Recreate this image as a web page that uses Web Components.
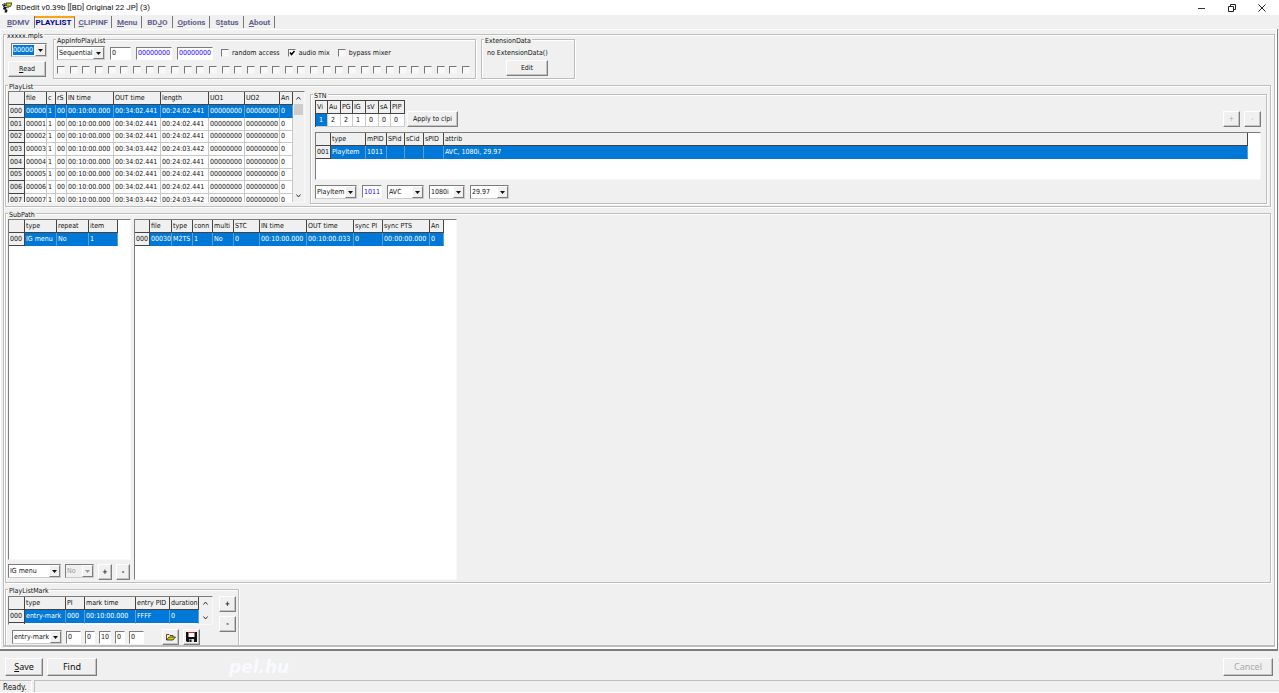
<!DOCTYPE html>
<html lang="en">
<head>
<meta charset="utf-8">
<title>BDedit</title>
<style>
  :root {
    --face: #f0f0f0;
    --shade: #7c7c7c;
    --line: #bdbdbd;
    --select: #0078d7;
  }
  body {
    margin: 0;
    background: var(--face);
    color: #111;
    font: 7px/10px "DejaVu Sans Condensed", "DejaVu Sans", sans-serif;
  }
</style>
</head>
<body>
<bd-app></bd-app>

<template id="app-template">
  <style>
    :host { display: flex; flex-direction: column; min-height: 100vh; }
    .row { display: flex; align-items: flex-start; }
    .page {
      flex: 1; display: flex; flex-direction: column;
      margin-right: 1px; padding: 5px 2px 2px 3px;
      border: solid var(--shade); border-width: 0 1px 2px 0;
      box-shadow: inset 1px 1px #fff, inset -1px -1px #fff;
    }
    .root { flex: 1; display: flex; flex-direction: column; border-width: 1px 1px 2px 1px; }
    .top { gap: 5px; padding: 4px 0 0 4px; }
    .disc { display: flex; flex-direction: column; gap: 4px; width: 40px; padding-top: 4px; }
    .disc bd-combo { margin-left: 3px; }
    .info { width: 423px; height: 40px; }
    .info .row { padding: 6px 3px 0; align-items: center; }
    .info .fields > * + * { margin-left: 5px; }
    .info .fields bd-check { margin-left: 8px; }
    .info .mask { justify-content: space-between; padding-top: 6px; padding-right: 5px; }
    .ext { width: 94px; height: 40px; }
    .ext .body { display: flex; flex-direction: column; padding: 8px 26px 0 5px; gap: 2px; white-space: nowrap; }
    .ext bd-button { align-self: flex-end; }
    .block { margin: 6px 3px 0 1px; }
    .playlist { padding: 5px 3px 2px 2px; gap: 5px; display: flex; }
    .playlist > bd-grid { flex: none; width: 297px; height: 112px; }
    .stn { flex: 1; margin-top: 3px; padding-bottom: 4px; }
    .stn .body { padding: 5px 5px 0 4px; }
    .stn .counts { gap: 2px; align-items: flex-end; }
    .stn .counts bd-grid { width: 90px; }
    .stn .counts .push { margin-left: auto; }
    .stn .counts .push + bd-button { margin-left: 2px; }
    .stn .streams { height: 48px; margin-top: 5px; }
    .stn .codec { gap: 5px; margin-top: 5px; }
    .subpath { flex: 1; display: flex; gap: 3px; padding: 5px 3px 2px 2px; }
    .left { display: flex; flex-direction: column; width: 123px; gap: 4px; }
    .left bd-grid { flex: 1; }
    .left .row { gap: 4px; }
    .items { width: 323px; }
    .mark { width: 234px; height: 56px; border-bottom: 0; box-shadow: inset 1px 1px #fff, 1px 0 #fff; }
    .mark .body { display: grid; grid-template-columns: 205px 16px; gap: 4px 6px; padding: 6px 3px 0 2px; }
    .mark bd-grid { height: 29px; }
    .mark .side { display: flex; flex-direction: column; gap: 4px; grid-row: span 2; }
    .mark .edit { gap: 4px; padding: 0 13px 0 4px; align-items: center; }
    .mark .edit .push { margin-left: auto; }
    .foot { gap: 4px; padding: 7px 6px 4px 5px; align-items: center; }
    .foot .push { margin-left: auto; }
    .brand { margin-left: 128px; color: #f8faff; font: italic bold 17px/18px "DejaVu Sans", sans-serif; }
  </style>
  <bd-titlebar>BDedit v0.39b [[BD] Original 22 JP] (3)</bd-titlebar>
  <bd-tabs></bd-tabs>
  <div class="page">
    <bd-group class="root" legend="xxxxx.mpls">
      <div class="row top">
        <div class="disc">
          <bd-combo label="Playlist file" value="00000" width="36" active></bd-combo>
          <bd-button width="38"><u>R</u>ead</bd-button>
        </div>
        <bd-group class="info" legend="AppInfoPlayList">
          <div class="row fields">
            <bd-combo label="Playback type" value="Sequential" width="48"></bd-combo>
            <bd-field label="Playback count" value="0" width="21"></bd-field>
            <bd-field label="UO mask 1" value="00000000" width="36" mark></bd-field>
            <bd-field label="UO mask 2" value="00000000" width="36" mark></bd-field>
            <bd-check>random access</bd-check>
            <bd-check checked>audio mix</bd-check>
            <bd-check>bypass mixer</bd-check>
          </div>
          <div class="row mask"></div>
        </bd-group>
        <bd-group class="ext" legend="ExtensionData">
          <div class="body">no ExtensionData()
            <bd-button width="42">Edit</bd-button>
          </div>
        </bd-group>
      </div>

      <bd-group class="block playlist" legend="PlayList">
        <bd-grid source="playlist" scroll="playlist"></bd-grid>
        <bd-group class="stn" legend="STN">
          <div class="body">
            <div class="row counts">
              <bd-grid source="counts" bare></bd-grid>
              <bd-button width="51">Apply to clpi</bd-button>
              <bd-button class="push" width="17" disabled>+</bd-button>
              <bd-button width="17" disabled>-</bd-button>
            </div>
            <bd-grid class="streams" source="streams"></bd-grid>
            <div class="row codec">
              <bd-combo label="Stream type" value="PlayItem" width="42"></bd-combo>
              <bd-field label="PID" value="1011" width="20" mark></bd-field>
              <bd-combo label="Codec" value="AVC" width="37"></bd-combo>
              <bd-combo label="Format" value="1080i" width="36"></bd-combo>
              <bd-combo label="Frame rate" value="29.97" width="39"></bd-combo>
            </div>
          </div>
        </bd-group>
      </bd-group>

      <bd-group class="block subpath" legend="SubPath">
        <div class="left">
          <bd-grid source="paths"></bd-grid>
          <div class="row">
            <bd-combo label="SubPath type" value="IG menu" width="53"></bd-combo>
            <bd-combo label="Repeat" value="No" width="29" disabled></bd-combo>
            <bd-button width="14"><b>+</b></bd-button>
            <bd-button width="14"><b>-</b></bd-button>
          </div>
        </div>
        <bd-grid class="items" source="items"></bd-grid>
      </bd-group>

      <bd-group class="block mark" legend="PlayListMark">
        <div class="body">
          <bd-grid source="marks" scroll="marks"></bd-grid>
          <div class="side">
            <bd-button width="17"><b>+</b></bd-button>
            <bd-button width="17"><b>-</b></bd-button>
          </div>
          <div class="row edit">
            <bd-combo label="Mark type" value="entry-mark" width="50"></bd-combo>
            <bd-field label="PlayItem" value="0" width="15"></bd-field>
            <bd-field label="Hours" value="0" width="10"></bd-field>
            <bd-field label="Minutes" value="10" width="12"></bd-field>
            <bd-field label="Seconds" value="0" width="10"></bd-field>
            <bd-field label="Frames" value="0" width="15"></bd-field>
            <bd-button class="push" width="17" label="Open marks">
              <svg width="10" height="8" viewBox="0 0 20 16"><path d="M1 14V3h5l2 2h6v3" fill="#ffff99" stroke="#222" stroke-width="1.6"/><path d="M1 14l5-6h13l-5 6z" fill="#d6d000" stroke="#222" stroke-width="1.6"/></svg>
            </bd-button>
            <bd-button width="17" label="Save marks">
              <svg width="11" height="10" viewBox="0 0 22 20"><path d="M0 0h22v20H2l-2-2z" fill="#111"/><path d="M5 2h12v8H5z" fill="#fff"/><path d="M4 0h14v2H4z" fill="#e02020"/><path d="M6 14h10v6H6z" fill="#ddd"/><path d="M7 15h4v5H7z" fill="#111"/></svg>
            </bd-button>
          </div>
        </div>
      </bd-group>
    </bd-group>
  </div>
  <div class="row foot">
    <bd-button width="38" big><u>S</u>ave</bd-button>
    <bd-button width="50" big>Find</bd-button>
    <span class="brand">pel.hu</span>
    <bd-button class="push" width="50" big disabled>Cancel</bd-button>
  </div>
  <bd-status>Ready.</bd-status>
</template>

<script>
// contents of the grids
const grids = {
  playlist: {
    cols: [16, 22, 9, 11, 47, 47, 48, 36, 35, 13],
    heads: ['', 'file', 'c', 'rS', 'IN time', 'OUT time', 'length', 'UO1', 'UO2', 'An'],
    rows: ['02.441', '02.441', '02.441', '03.442', '02.441', '02.441', '02.441', '03.442'].map((t, i) => [
      `00${i}`, `0000${i}`, '1', '00', '00:10:00.000', `00:34:${t}`, `00:24:${t}`, '00000000', '00000000', '0',
    ]),
  },
  counts: {
    cols: [12, 13, 12, 13, 13, 12, 14],
    heads: ['Vi', 'Au', 'PG', 'IG', 'sV', 'sA', 'PIP'],
    rows: [['1', '2', '2', '1', '0', '0', '0']],
  },
  streams: {
    cols: [15, 35, 21, 18, 19, 20, 'auto'],
    heads: ['', 'type', 'mPID', 'SPid', 'sCid', 'sPID', 'attrib'],
    rows: [['001', 'PlayItem', '1011', '', '', '', 'AVC, 1080i, 29.97']],
  },
  paths: {
    cols: [16, 32, 32, 29],
    heads: ['', 'type', 'repeat', 'item'],
    rows: [['000', 'IG menu', 'No', '1']],
  },
  items: {
    cols: [15, 22, 21, 20, 21, 26, 47, 47, 29, 47, 14],
    heads: ['', 'file', 'type', 'conn', 'multi', 'STC', 'IN time', 'OUT time', 'sync PI', 'sync PTS', 'An'],
    rows: [['000', '00030', 'M2TS', '1', 'No', '0', '00:10:00.000', '00:10:00.033', '0', '00:00:00.000', '0']],
  },
  marks: {
    cols: [16, 41, 19, 51, 34, 29],
    heads: ['', 'type', 'PI', 'mark time', 'entry PID', 'duration'],
    rows: [['000', 'entry-mark', '000', '00:10:00.000', 'FFFF', '0'], ['', '', '', '', '', '']],
  },
};

class BdTitlebar extends HTMLElement {
  constructor() {
    super();
    this.attachShadow({ mode: 'open' }).innerHTML = `
      <style>
        :host { display: flex; align-items: center; height: 15px; padding-right: 2px; background: #fff; font: 8px/12px Roboto, "Open Sans", sans-serif; }
        .logo { margin: 0 4px 0 2px; }
        .caption { flex: 1; }
        button { width: 30px; height: 15px; padding: 0; border: 0; background: none; line-height: 0; }
      </style>
      <svg class="logo" width="10" height="11" viewBox="0 0 20 22">
        <path d="M8 2h12l-3 7-8-1z" fill="#e8d800" stroke="#111" stroke-width="1.5"/>
        <path d="M0 5l6-3 2 5-5 3zM4 9l6 1-2 4 3 2-1 5H5l1-4-4-3zM10 10l4 1-2 2z" fill="#111"/>
        <path d="M2 6l3-1M5 15l2 1" stroke="#fff" stroke-width="1.5"/>
      </svg>
      <span class="caption"><slot></slot></span>
      <button aria-label="Minimize"><svg width="8" height="8"><path d="M0 4.5h7" stroke="#333"/></svg></button>
      <button aria-label="Restore"><svg width="8" height="8" fill="none" stroke="#222"><path d="M.5 2.500h5v5h-5zM2.500 2V.5h5v5H6"/></svg></button>
      <button aria-label="Close"><svg width="8" height="8"><path d="M.5.5l7 7M7.500.5l-7 7" stroke="#222"/></svg></button>
    `;
  }
}

class BdTabs extends HTMLElement {
  constructor() {
    super();
    // the underlined letter is the access key
    const tabs = [['', 'B', 'DMV'], ['PLAYLIST', '', ''], ['', 'C', 'LIPINF'], ['', 'M', 'enu'],
      ['BD', 'J', 'O'], ['', 'O', 'ptions'], ['S', 't', 'atus'], ['', 'A', 'bout']];
    this.attachShadow({ mode: 'open' }).innerHTML = `
      <style>
        :host { display: flex; height: 13px; padding: 1px 0 0 2px; font: bold 8px/13px Roboto, sans-serif; }
        a { height: 12px; padding: 0 4px 0 5px; color: #62628e; text-decoration: none; border-right: 1px solid #777; white-space: nowrap; }
        a:first-child { border: 0; padding: 0 7px 0 4px; }
        a[aria-current] { color: #00008b; border-top: 2px solid #f9a51a; line-height: 9px; height: 10px; padding: 0 3px 0 1px; }
        a[aria-current] + a { padding: 0 3px; }
      </style>
      ${tabs.map(([a, key, b], i) => `<a href="#"${i === 1 ? ' aria-current="page"' : ''}>${a}<u>${key}</u>${b}</a>`).join('')}
    `;
  }
}

class BdGroup extends HTMLElement {
  constructor() {
    super();
    this.attachShadow({ mode: 'open' }).innerHTML = `
      <style>
        :host { display: block; position: relative; box-sizing: border-box; border: 1px solid var(--line); box-shadow: inset 1px 1px #fff, 1px 1px #fff; }
        .legend { position: absolute; top: -3px; left: 2px; padding: 0 1px; background: var(--face); line-height: 8px; white-space: nowrap; }
      </style>
      <span class="legend"></span>
      <slot></slot>
    `;
  }

  connectedCallback() {
    const legend = this.getAttribute('legend');
    this.setAttribute('role', 'group');
    this.setAttribute('aria-label', legend);
    this.shadowRoot.querySelector('.legend').textContent = legend;
  }
}

class BdButton extends HTMLElement {
  connectedCallback() {
    const label = this.getAttribute('label');
    this.attachShadow({ mode: 'open' }).innerHTML = `
      <style>
        :host { display: block; flex: none; width: ${this.getAttribute('width')}px; }
        button {
          display: flex; align-items: center; justify-content: center;
          box-sizing: border-box; width: 100%; height: 16px; padding: 0;
          background: var(--face); color: inherit; font: inherit; white-space: nowrap;
          border: 1px solid; border-color: #fff var(--shade) var(--shade) #fff;
          box-shadow: inset -1px -1px #c4c4c4;
        }
        :host([big]) button { height: 18px; font: 9px/12px "Noto Sans", sans-serif; }
        button:disabled { color: #aaa; }
      </style>
      <button${this.hasAttribute('disabled') ? ' disabled' : ''}${label ? ` aria-label="${label}"` : ''}><slot></slot></button>
    `;
  }
}

class BdField extends HTMLElement {
  connectedCallback() {
    this.attachShadow({ mode: 'open' }).innerHTML = `
      <style>
        :host { display: block; flex: none; width: ${this.getAttribute('width')}px; }
        input {
          display: block; box-sizing: border-box; width: 100%; height: 13px; padding: 0 0 0 1px; border-radius: 0;
          border: 1px solid; border-color: var(--shade) #fff #fff var(--shade);
          background: #fff; color: inherit; font: inherit;
        }
        :host([mark]) input { color: #1a00ff; }
      </style>
      <input aria-label="${this.getAttribute('label')}" value="${this.getAttribute('value')}">
    `;
  }
}

class BdCombo extends HTMLElement {
  connectedCallback() {
    this.attachShadow({ mode: 'open' }).innerHTML = `
      <style>
        :host {
          display: flex; flex: none; box-sizing: border-box; height: 14px; width: ${this.getAttribute('width')}px;
          background: #fff; border: 1px solid; border-color: var(--shade) #ccc #ccc var(--shade);
        }
        select { flex: 1; min-width: 0; margin: 0; padding: 0 0 0 1px; border: 0; border-radius: 0; appearance: none; background: none; color: inherit; font: inherit; opacity: 1; overflow: hidden; text-overflow: clip; }
        .arrow { display: flex; align-items: center; justify-content: center; width: 9px; background: var(--face); border: 1px solid; border-color: #fff var(--shade) var(--shade) #fff; }
        :host([active]) select { background: var(--select); color: #fff; margin: 1px; padding: 0; }
        :host([disabled]) { color: #999; background: var(--face); }
      </style>
      <select aria-label="${this.getAttribute('label')}"${this.hasAttribute('disabled') ? ' disabled' : ''}>
        <option>${this.getAttribute('value')}</option>
      </select>
      <span class="arrow"><svg width="5" height="3"><path d="M0 0h5L2.500 3z" fill="currentColor"/></svg></span>
    `;
  }
}

class BdCheck extends HTMLElement {
  connectedCallback() {
    this.attachShadow({ mode: 'open' }).innerHTML = `
      <style>
        :host { display: block; }
        label { display: flex; align-items: center; gap: 3px; white-space: nowrap; }
        .box { display: grid; width: 8px; height: 8px; }
        input, svg { grid-area: 1 / 1; }
        input {
          appearance: none; box-sizing: border-box; width: 8px; height: 8px; margin: 0; background: #f8f8f8;
          border: 1px solid; border-color: #777 #f4f4f4 #f4f4f4 #777;
        }
        svg { display: none; pointer-events: none; }
        input:checked + svg { display: block; }
      </style>
      <label>
        <span class="box">
          <input type="checkbox"${this.hasAttribute('checked') ? ' checked' : ''}${this.textContent ? '' : ' aria-label="UO flag"'}>
          <svg width="8" height="8"><path d="M2 3.500l1.500 2 3-3.500" fill="none" stroke="#000" stroke-width="1.500"/></svg>
        </span>
        ${this.textContent ? '<slot></slot>' : ''}
      </label>
    `;
  }
}

class BdGrid extends HTMLElement {
  connectedCallback() {
    const { cols, heads, rows } = grids[this.getAttribute('source')];
    const scroll = this.getAttribute('scroll');
    const fluid = cols.includes('auto');
    this.attachShadow({ mode: 'open' }).innerHTML = `
      <style>
        :host {
          display: flex; align-items: flex-start; box-sizing: border-box; overflow: hidden; background: #fff;
          border: 1px solid; border-color: var(--shade) #f8f8f8 #f8f8f8 var(--shade);
        }
        :host([bare]) { border-color: #444; border-width: 1px 0 0 1px; }
        table { flex: none; table-layout: fixed; border-collapse: separate; border-spacing: 0; width: ${fluid ? 'calc(100% - 12px)' : cols.reduce((a, b) => a + b) + 'px'}; }
        th, td { box-sizing: border-box; height: 13px; padding: 0 0 0 1px; text-align: left; font-weight: normal; overflow: hidden; white-space: nowrap; border: 0 solid #c8c8c8; border-width: 0 1px 1px 0; }
        tr:nth-child(3n) td, tr:nth-child(3n) th { height: 12px; line-height: 9px; }
        th { background: var(--face); border-color: #444; }
        tr.on td { background: var(--select); color: #fff; border-bottom-color: var(--select); border-right-color: #5f9fd0; }
        :host([bare]) tr.on td { background: #fff; color: inherit; border-color: #ccc; padding-left: 3px; }
        :host([bare]) tr.on td:first-child { background: var(--select); color: #fff; }
        .bar { display: flex; flex-direction: column; align-items: center; justify-content: space-between; flex: 1; align-self: stretch; background: var(--face); padding: 4px 0; box-sizing: border-box; }
        .thumb { width: 9px; height: 11px; margin: 4px 0 auto; background: #cdcdcd; }
      </style>
      <table>
        <colgroup>${cols.map(w => `<col style="width: ${w === 'auto' ? w : w + 'px'}">`).join('')}</colgroup>
        <thead><tr>${heads.map(h => `<th scope="col">${h}</th>`).join('')}</tr></thead>
        <tbody>
          ${rows.map((row, i) => `<tr${i ? '' : ' class="on"'}>${row.map((c, j) =>
            heads[0] === '' && j === 0 ? `<th scope="row">${c}</th>` : `<td>${c}</td>`).join('')}</tr>`).join('')}
        </tbody>
      </table>
      ${scroll ? `<div class="bar">
        <svg width="5" height="4"><path d="M.5 3.500l2-2.500 2 2.500" fill="none" stroke="#333"/></svg>
        ${scroll === 'playlist' ? '<span class="thumb"></span>' : ''}
        <svg width="5" height="4"><path d="M.5.5l2 2.500 2-2.500" fill="none" stroke="#333"/></svg>
      </div>` : ''}
    `;
  }
}

class BdStatus extends HTMLElement {
  constructor() {
    super();
    this.attachShadow({ mode: 'open' }).innerHTML = `
      <style>
        :host { display: flex; gap: 2px; height: 12px; border-bottom: 1px solid #fff; line-height: 13px; }
        span { box-sizing: border-box; border-top: 1px solid var(--line); padding-left: 3px; font-size: 8px; }
        .state { width: 32px; border-right: 1px solid #fff; }
        .rest { flex: 1; border-left: 1px solid var(--line); }
      </style>
      <span class="state"><slot></slot></span><span class="rest"></span>
    `;
  }
}

class BdApp extends HTMLElement {
  constructor() {
    super();
    const root = this.attachShadow({ mode: 'open' });
    root.appendChild(document.getElementById('app-template').content.cloneNode(true));
    // one box for each user operation flag
    const mask = root.querySelector('.mask');
    for (let i = 0; i < 33; i++) mask.append(document.createElement('bd-check'));
  }
}

customElements.define('bd-titlebar', BdTitlebar);
customElements.define('bd-tabs', BdTabs);
customElements.define('bd-group', BdGroup);
customElements.define('bd-button', BdButton);
customElements.define('bd-field', BdField);
customElements.define('bd-combo', BdCombo);
customElements.define('bd-check', BdCheck);
customElements.define('bd-grid', BdGrid);
customElements.define('bd-status', BdStatus);
customElements.define('bd-app', BdApp);
</script>
</body>
</html>
